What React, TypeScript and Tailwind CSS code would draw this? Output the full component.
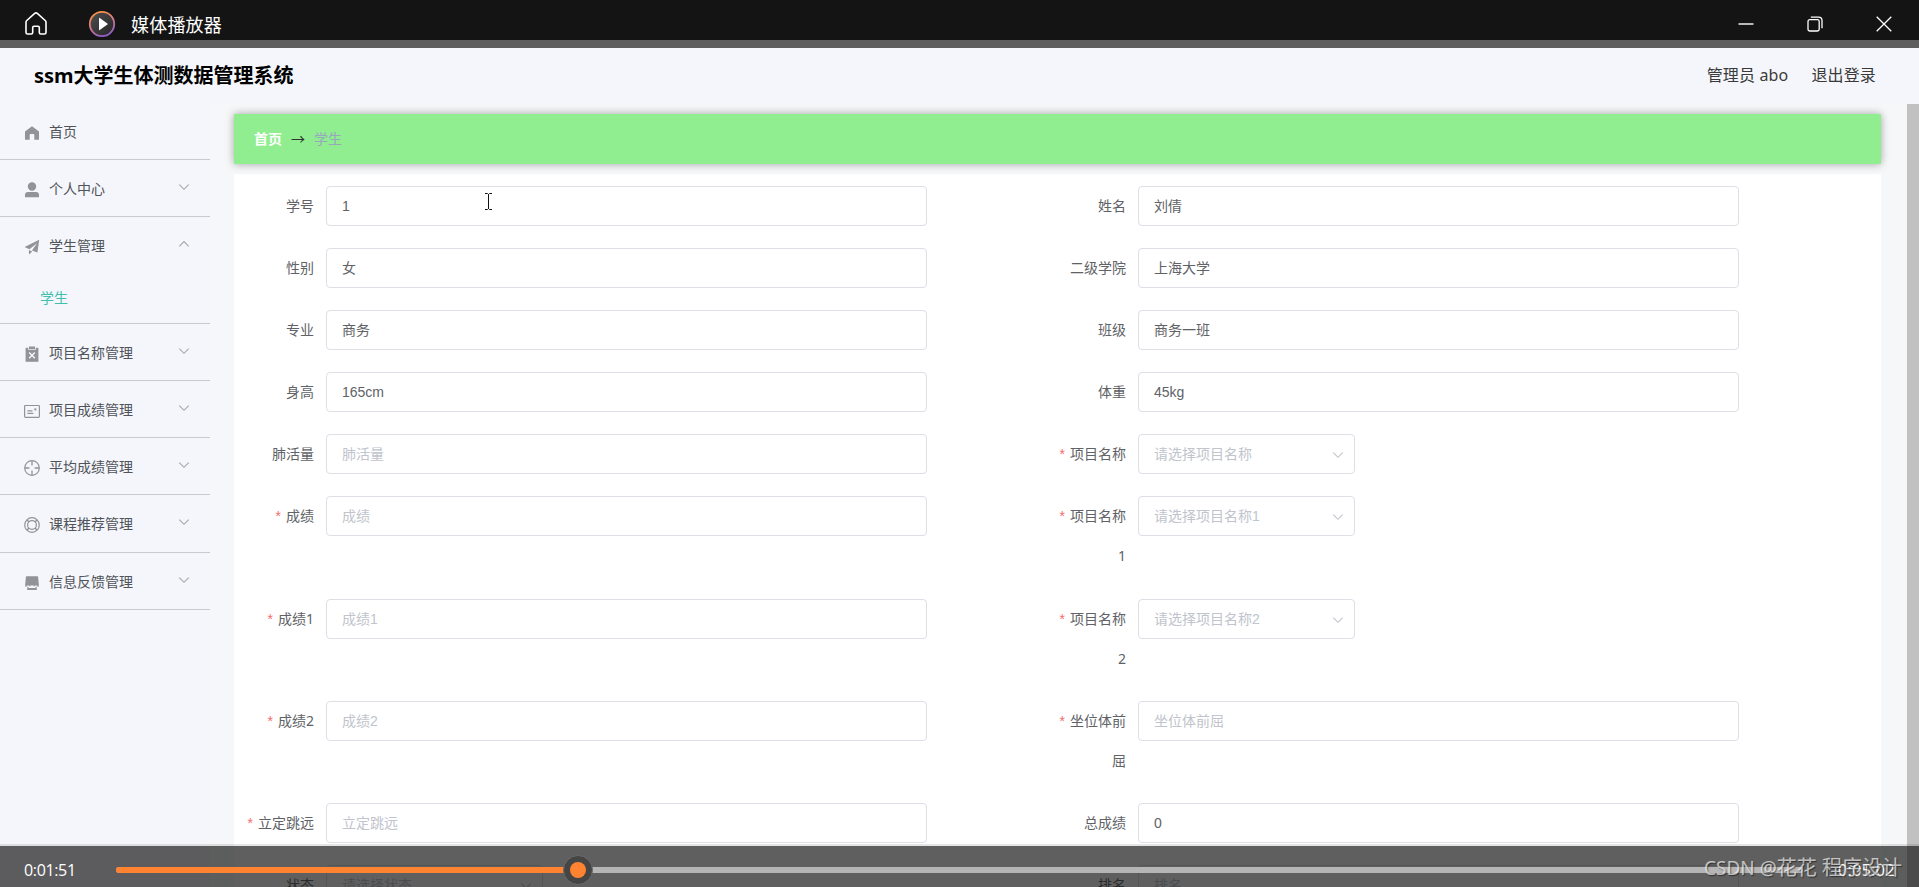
import React from 'react';

type Field = {
  label: string;
  value?: string;
  placeholder?: string;
  required?: boolean;
  select?: boolean;
};

type MenuItem = {
  icon: React.FC;
  title: string;
  height: string;
  children?: string[];
  plain?: boolean;
};

const HomeIcon: React.FC = () => (
  <svg viewBox="0 0 16 16" className="w-4 h-4" fill="currentColor">
    <path d="M8 1.2 15 6.6V14.8H10.3V9.8Q10.3 9 9.5 9H6.5Q5.7 9 5.7 9.8V14.8H1V6.6Z" />
  </svg>
);

const UserIcon: React.FC = () => (
  <svg viewBox="0 0 16 16" className="w-4 h-4" fill="currentColor">
    <circle cx="8" cy="4.5" r="4.2" />
    <path d="M1 15.3V13Q1 10 4 10H12Q15 10 15 13V15.3Z" />
  </svg>
);

const SendIcon: React.FC = () => (
  <svg viewBox="0 0 16 16" className="w-4 h-4" fill="currentColor">
    <path d="M15.2 .8 13.4 13.6 8 11.4 13 4.2 5.4 10.2 0.6 8Z" />
    <path d="M4.9 11 8.2 12.4 5 15.6Z" />
  </svg>
);

const ClipboardIcon: React.FC = () => (
  <svg viewBox="0 0 16 16" className="w-4 h-4">
    <path fill="currentColor" d="M1.6 1.8H14.4V15.8H1.6Z" />
    <path stroke="#f4f6fb" strokeWidth="0.8" fill="none" d="M4.5 1.6V3.4H11.5V1.6" />
    <path fill="currentColor" d="M5 0.5H11V2.8H5Z" />
    <path stroke="#f4f6fb" strokeWidth="1.4" d="M5.2 6.4 10.8 12.2M10.8 6.4 5.2 12.2" />
  </svg>
);

const PostcardIcon: React.FC = () => (
  <svg viewBox="0 0 16 16" className="w-4 h-4" fill="none" stroke="currentColor" strokeWidth="1.2">
    <rect x="0.6" y="2.5" width="14.8" height="11.8" rx="0.8" />
    <path d="M3.4 7.8H8.4M3.4 10.3H9.4" />
    <path d="M10.3 6.4H12.3" strokeWidth="2" />
  </svg>
);

const AimIcon: React.FC = () => (
  <svg viewBox="0 0 16 16" className="w-4 h-4" fill="none" stroke="currentColor" strokeWidth="1.2">
    <circle cx="8" cy="8" r="7.3" />
    <path d="M8 1V5.4M8 10.6V15M1 8H5.4M10.6 8H15" strokeWidth="1.3" />
  </svg>
);

const HelpIcon: React.FC = () => (
  <svg viewBox="0 0 16 16" className="w-4 h-4" fill="none" stroke="currentColor" strokeWidth="1.2">
    <circle cx="8" cy="8" r="7.3" />
    <circle cx="8" cy="8" r="4.4" />
    <path d="M3 3 5 5M13 3 11 5M3 13 5 11M13 13 11 11" strokeWidth="1.5" />
  </svg>
);

const PrinterIcon: React.FC = () => (
  <svg viewBox="0 0 16 16" className="w-4 h-4" fill="currentColor">
    <path d="M2.8 1.2H13.2Q14 1.2 14.1 2L14.9 10.4H1.1L1.9 2Q2 1.2 2.8 1.2Z" />
    <path d="M1.1 10.3H3.4V11.6H1.1ZM5 10.3H6.5V11.2H5ZM9.5 10.3H11V11.2H9.5ZM12.6 10.3H14.9V11.6H12.6Z" />
    <path d="M3.2 12.2H4.6V13H11.4V12.2H12.8V14.9H3.2Z" />
  </svg>
);

const menu: MenuItem[] = [
  { icon: HomeIcon, title: '首页', height: 'h-14', plain: true },
  { icon: UserIcon, title: '个人中心', height: 'h-[57px]' },
  { icon: SendIcon, title: '学生管理', height: 'h-[107px]', children: ['学生'] },
  { icon: ClipboardIcon, title: '项目名称管理', height: 'h-[57px]' },
  { icon: PostcardIcon, title: '项目成绩管理', height: 'h-[57px]' },
  { icon: AimIcon, title: '平均成绩管理', height: 'h-[57px]' },
  { icon: HelpIcon, title: '课程推荐管理', height: 'h-[58px]' },
  { icon: PrinterIcon, title: '信息反馈管理', height: 'h-[57px]' },
];

const rows: { height: string; fields: [Field, Field] }[] = [
  { height: 'h-[62px]', fields: [{ label: '学号', value: '1' }, { label: '姓名', value: '刘倩' }] },
  { height: 'h-[62px]', fields: [{ label: '性别', value: '女' }, { label: '二级学院', value: '上海大学' }] },
  { height: 'h-[62px]', fields: [{ label: '专业', value: '商务' }, { label: '班级', value: '商务一班' }] },
  { height: 'h-[62px]', fields: [{ label: '身高', value: '165cm' }, { label: '体重', value: '45kg' }] },
  {
    height: 'h-[62px]',
    fields: [
      { label: '肺活量', placeholder: '肺活量' },
      { label: '项目名称', placeholder: '请选择项目名称', required: true, select: true },
    ],
  },
  {
    height: 'h-[103px]',
    fields: [
      { label: '成绩', placeholder: '成绩', required: true },
      { label: '项目名称1', placeholder: '请选择项目名称1', required: true, select: true },
    ],
  },
  {
    height: 'h-[102px]',
    fields: [
      { label: '成绩1', placeholder: '成绩1', required: true },
      { label: '项目名称2', placeholder: '请选择项目名称2', required: true, select: true },
    ],
  },
  {
    height: 'h-[102px]',
    fields: [
      { label: '成绩2', placeholder: '成绩2', required: true },
      { label: '坐位体前屈', placeholder: '坐位体前屈', required: true },
    ],
  },
  {
    height: 'h-[62px]',
    fields: [
      { label: '立定跳远', placeholder: '立定跳远', required: true },
      { label: '总成绩', value: '0' },
    ],
  },
  {
    height: 'h-[62px]',
    fields: [
      { label: '状态', placeholder: '请选择状态', select: true },
      { label: '排名', placeholder: '排名' },
    ],
  },
];

const Chevron: React.FC<{ up?: boolean }> = ({ up }) => (
  <svg viewBox="0 0 12 8" className="w-3 h-2" fill="none" stroke="currentColor" strokeWidth="1.1">
    <path d={up ? 'M1.3 6.3 6 1.6 10.7 6.3' : 'M1.3 1.6 6 6.3 10.7 1.6'} />
  </svg>
);

const TitleBar: React.FC = () => (
  <div className="h-10 shrink-0 bg-[#141414] flex items-center justify-between pl-6 pr-[27px] text-white">
    <div className="flex items-center pt-2">
      <svg viewBox="0 0 24 24" className="w-6 h-6" fill="none" stroke="currentColor" strokeWidth="1.6" strokeLinejoin="round">
        <path d="M2 10.2Q2 9.2 2.8 8.5L10.7 1.4Q12 .4 13.3 1.4L21.2 8.5Q22 9.2 22 10.2V20.4Q22 22 20.4 22H16.8Q15.3 22 15.3 20.4V15.6Q15.3 14.3 14 14.3H10Q8.7 14.3 8.7 15.6V20.4Q8.7 22 7.2 22H3.6Q2 22 2 20.4Z" />
      </svg>
      <svg viewBox="0 0 28 28" className="w-7 h-7 ml-10">
        <defs>
          <linearGradient id="ring" x1="0.3" y1="0" x2="0.7" y2="1">
            <stop offset="0" stopColor="#ff9140" />
            <stop offset="0.5" stopColor="#cf7a8c" />
            <stop offset="1" stopColor="#8a5cd0" />
          </linearGradient>
          <linearGradient id="disc" x1="0" y1="0" x2="1" y2="1">
            <stop offset="0" stopColor="#505050" />
            <stop offset="1" stopColor="#242424" />
          </linearGradient>
        </defs>
        <circle cx="14" cy="14" r="12.2" fill="url(#disc)" stroke="url(#ring)" strokeWidth="1.8" />
        <path d="M11 8.4Q11 7.6 11.7 8L19.4 13.4Q20 14 19.4 14.6L11.7 20Q11 20.4 11 19.6Z" fill="#fff" />
      </svg>
      <span className="ml-[15px] mt-px text-[18px] leading-6 tracking-[0.2px]">媒体播放器</span>
    </div>
    <div className="flex items-center gap-[53px] pt-[7px]">
      <svg viewBox="0 0 16 16" className="w-4 h-4" stroke="currentColor" strokeWidth="1.4">
        <path d="M.5 8H15.5" />
      </svg>
      <svg viewBox="0 0 16 16" className="w-4 h-4" fill="none" stroke="currentColor" strokeWidth="1.3">
        <rect x="1" y="3.6" width="11.2" height="11.4" rx="1.8" />
        <path d="M3.8 1.1H11.6Q15 1.1 15 4.6V12.2" />
      </svg>
      <svg viewBox="0 0 16 16" className="w-4 h-4" stroke="currentColor" strokeWidth="1.3">
        <path d="M.7 .7 15.3 15.3M15.3 .7 .7 15.3" />
      </svg>
    </div>
  </div>
);

const Header: React.FC = () => (
  <header className="h-14 shrink-0 bg-[#f4f6fb] flex items-center justify-between pl-[34px] pr-[43px]">
    <h1 className="text-xl font-bold text-black leading-none">ssm大学生体测数据管理系统</h1>
    <div className="flex items-center gap-[23px] pb-[3px] text-base leading-none tracking-[0.15px] text-[#3a3a3a]">
      <span>管理员 abo</span>
      <span>退出登录</span>
    </div>
  </header>
);

const Sidebar: React.FC = () => (
  <aside className="w-[210px] shrink-0 bg-[#f4f6fb] text-sm">
    {menu.map((item) => (
      <div key={item.title} className={`border-b border-[#c8cacf] ${item.height}`}>
        <div className={`h-14 pl-6 pr-5 flex items-center ${item.plain ? '' : 'pt-0.5'}`}>
          <span className="text-[#909399] pt-0.5"><item.icon /></span>
          <span className="ml-[9px] text-[#505359]">{item.title}</span>
          {!item.plain && (
            <span className="ml-auto mb-1 text-[#a4a7ad]"><Chevron up={!!item.children} /></span>
          )}
        </div>
        {item.children?.map((child) => (
          <div key={child} className="h-[50px] pl-10 flex items-center text-[#3fbfae]">{child}</div>
        ))}
      </div>
    ))}
  </aside>
);

const FormField: React.FC<{ field: Field }> = ({ field }) => (
  <div className="w-[812px] shrink-0 flex items-start">
    <label className="w-20 shrink-0 pr-3 text-right break-all leading-10 text-[#606266]">
      {field.required && <span className="mr-[5px] text-[#f56c6c] font-['Liberation_Sans']">*</span>}
      {field.label}
    </label>
    <div
      className={`h-10 shrink-0 px-[15px] flex items-center justify-between bg-white border border-[#dcdfe6] rounded font-['Liberation_Sans','Noto_Sans_CJK_SC',sans-serif] ${
        field.select ? 'w-[217px]' : 'w-[601px]'
      } ${field.value ? 'text-[#606266]' : 'text-[#c0c4cc]'}`}
    >
      <span>{field.value ?? field.placeholder}</span>
      {field.select && <span className="-mr-[5px] mt-0.5"><Chevron /></span>}
    </div>
  </div>
);

const TextCursor: React.FC = () => (
  <svg viewBox="0 0 8 17" className="absolute left-[484px] top-[193px] w-2 h-[17px]" fill="none" stroke="#111">
    <path d="M1 .5H3.5L4.5 1.5 5.5 .5H8M4.5 1V16M1 16.5H3.5L4.5 15.5 5.5 16.5H8" />
  </svg>
);

const PlayerControls: React.FC = () => (
  <div className="absolute inset-x-0 bottom-0 h-[43px] border-t-2 border-black/10">
    <div className="h-full pl-6 pr-6 pt-[7px] bg-[#111]/67 flex items-center text-white text-base leading-none font-['Open_Sans',sans-serif]">
      <span className="w-[92px] tracking-[-0.35px]">0:01:51</span>
      <div className="relative w-[1687px] h-1.5 rounded-full bg-[#b5b5b5]">
        <div className="w-[462px] h-1.5 rounded-full bg-[#ff8331]" />
        <div className="absolute left-[447px] top-[-12px] w-[30px] h-[30px] rounded-full bg-[#454545] border border-[#6a6a6a] flex items-center justify-center">
          <div className="w-4 h-4 rounded-full bg-[#ff8331]" />
        </div>
      </div>
      <span className="ml-[35px] tracking-[0.4px]">0:05:02</span>
    </div>
  </div>
);

const App: React.FC = () => (
  <div className="relative w-[1919px] h-[887px] overflow-hidden flex flex-col bg-[#f6f7f9] font-['Noto_Sans','Noto_Sans_CJK_SC',sans-serif]">
    <TitleBar />
    <div className="h-2 shrink-0 bg-[#5e5e5f]" />
    <Header />
    <div className="flex-1 min-h-0 flex">
      <Sidebar />
      <main className="flex-1 px-6 pt-2.5 pr-[26px] text-sm">
        <div className="h-[50px] px-5 pb-0.5 flex items-center rounded-[1px] bg-[#90ee90] shadow-[0_0_8px_rgba(0,0,0,0.35)] font-['Noto_Sans_CJK_SC',sans-serif]">
          <span className="font-bold text-white">首页</span>
          <span className="mx-[9px] text-[#303133]">→</span>
          <span className="text-[#97a8be]">学生</span>
        </div>
        <form className="mt-2.5 pt-3 pl-3 bg-white">
          {rows.map((row) => (
            <div key={row.fields[0].label} className={`flex ${row.height}`}>
              {row.fields.map((field) => (
                <FormField key={field.label} field={field} />
              ))}
            </div>
          ))}
        </form>
      </main>
      <div className="w-3 shrink-0 bg-[#c1c1c1]" />
    </div>
    <TextCursor />
    <PlayerControls />
    <div className="absolute right-[17px] bottom-[9px] text-xl leading-none whitespace-nowrap text-white/65 [text-shadow:1px_1px_1px_rgba(0,0,0,0.5)]">
      <span className="text-[19px]">CSDN @</span>花花 程序设计
    </div>
  </div>
);

export default App;
